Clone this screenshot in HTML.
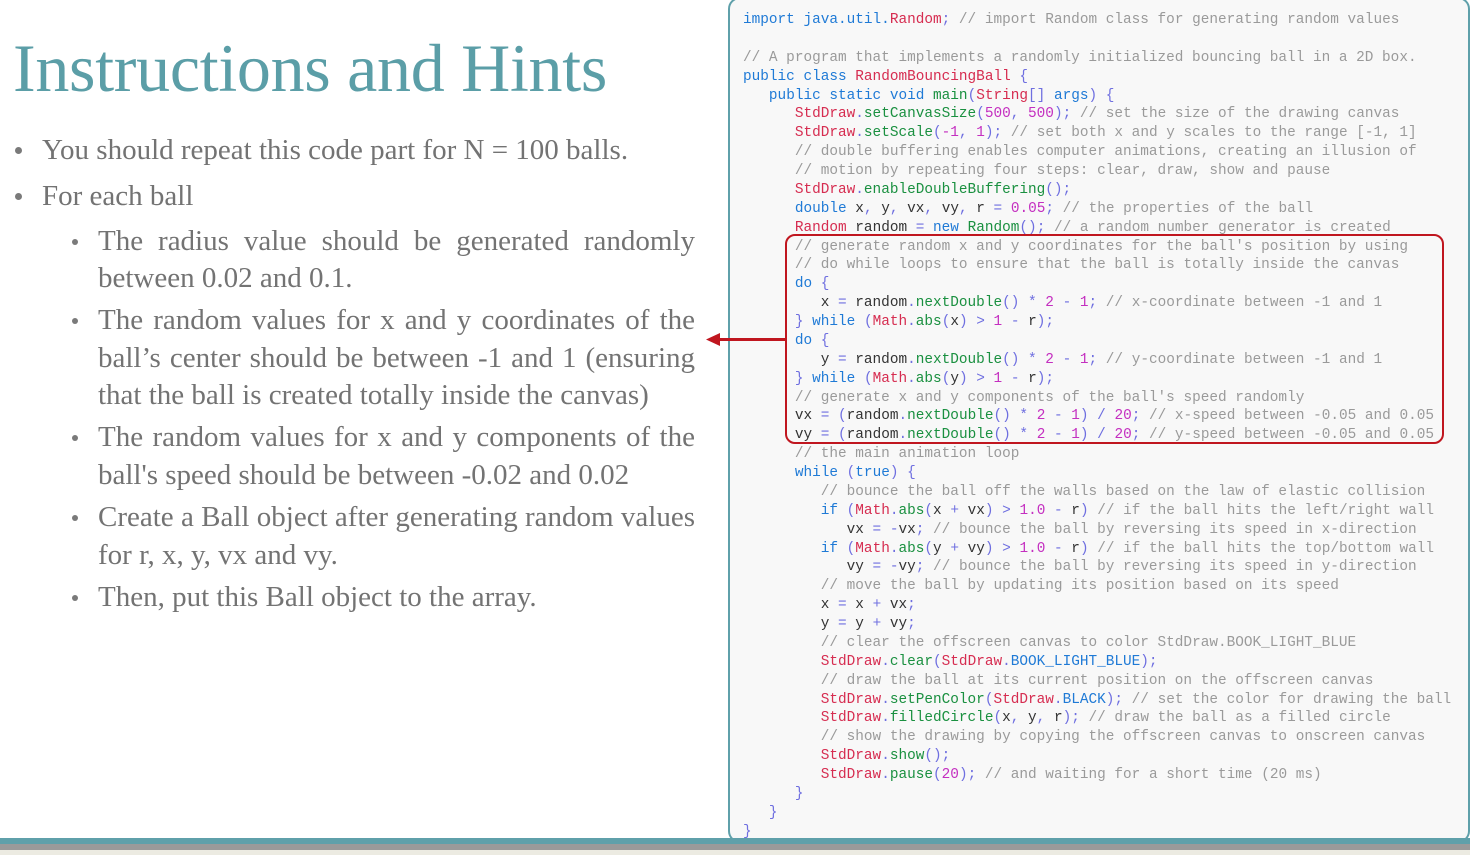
<!DOCTYPE html>
<html><head><meta charset="utf-8"><style>
body{margin:0;width:1470px;height:855px;background:#fff;position:relative;overflow:hidden;font-family:"Liberation Serif",serif}
.title{position:absolute;left:13px;top:28px;font-size:68px;color:#5b9ea7;letter-spacing:-0.3px;white-space:nowrap;line-height:80px}
.l{position:absolute;color:#737373;font-size:29px;letter-spacing:0px;white-space:nowrap;line-height:36px}
.j{text-align:justify;text-align-last:justify;width:597px}
.d{position:absolute;width:7px;height:7px;border-radius:50%;background:#7a7a7a}
.s{width:6px;height:6px}
.code{position:absolute;left:728px;top:-3px;width:738px;height:842px;border:2px solid #5fa0aa;border-radius:12px;background:#f8f8f8}
pre{position:absolute;left:743px;top:11px;margin:0;font-family:"Liberation Mono",monospace;font-size:14.4px;line-height:18.87px;color:#333}
.k{color:#1f7ad6}.r{color:#d62c50}.g{color:#1a9040}.n{color:#c42fc0}.c{color:#9a9a9a}.p{color:#6f6fe0}
.box{position:absolute;left:785px;top:234px;width:655px;height:206px;border:2px solid #c0161f;border-radius:10px}
.bot1{position:absolute;left:0;top:838px;width:1470px;height:6px;background:#5fa0aa}
.bot2{position:absolute;left:0;top:844px;width:1470px;height:6px;background:#9a9a9a}
.bot3{position:absolute;left:0;top:850px;width:1470px;height:5px;background:#ecebe2}
</style></head><body>
<div class="title">Instructions and Hints</div>
<div class="d" style="left:15px;top:147px"></div>
<div class="l" style="left:42px;top:132px">You should repeat this code part for N = 100 balls.</div>
<div class="d" style="left:15px;top:193px"></div>
<div class="l" style="left:42px;top:178px">For each ball</div>
<div class="d s" style="left:72px;top:239px"></div>
<div class="l j" style="left:98px;top:223px">The radius value should be generated randomly</div>
<div class="l" style="left:98px;top:260px">between 0.02 and 0.1.</div>
<div class="d s" style="left:72px;top:318px"></div>
<div class="l j" style="left:98px;top:302px">The random values for x and y coordinates of the</div>
<div class="l j" style="left:98px;top:340px">ball’s center should be between -1 and 1 (ensuring</div>
<div class="l" style="left:98px;top:377px">that the ball is created totally inside the canvas)</div>
<div class="d s" style="left:72px;top:435px"></div>
<div class="l j" style="left:98px;top:419px">The random values for x and y components of the</div>
<div class="l" style="left:98px;top:457px">ball's speed should be between -0.02 and 0.02</div>
<div class="d s" style="left:72px;top:515px"></div>
<div class="l j" style="left:98px;top:499px">Create a Ball object after generating random values</div>
<div class="l" style="left:98px;top:537px">for r, x, y, vx and vy.</div>
<div class="d s" style="left:72px;top:595px"></div>
<div class="l" style="left:98px;top:579px">Then, put this Ball object to the array.</div>

<div class="code"></div>
<pre><span class="k">import java.util.</span><span class="r">Random</span><span class="p">;</span> <span class="c">// import Random class for generating random values</span>

<span class="c">// A program that implements a randomly initialized bouncing ball in a 2D box.</span>
<span class="k">public class</span> <span class="r">RandomBouncingBall</span> <span class="p">{</span>
   <span class="k">public static void</span> <span class="g">main</span><span class="p">(</span><span class="r">String</span><span class="p">[]</span> <span class="k">args</span><span class="p">) {</span>
      <span class="r">StdDraw</span><span class="p">.</span><span class="g">setCanvasSize</span><span class="p">(</span><span class="n">500</span><span class="p">,</span> <span class="n">500</span><span class="p">);</span> <span class="c">// set the size of the drawing canvas</span>
      <span class="r">StdDraw</span><span class="p">.</span><span class="g">setScale</span><span class="p">(</span><span class="n">-1</span><span class="p">,</span> <span class="n">1</span><span class="p">);</span> <span class="c">// set both x and y scales to the range [-1, 1]</span>
      <span class="c">// double buffering enables computer animations, creating an illusion of</span>
      <span class="c">// motion by repeating four steps: clear, draw, show and pause</span>
      <span class="r">StdDraw</span><span class="p">.</span><span class="g">enableDoubleBuffering</span><span class="p">();</span>
      <span class="k">double</span> x<span class="p">,</span> y<span class="p">,</span> vx<span class="p">,</span> vy<span class="p">,</span> r <span class="p">=</span> <span class="n">0.05</span><span class="p">;</span> <span class="c">// the properties of the ball</span>
      <span class="r">Random</span> random <span class="p">=</span> <span class="k">new</span> <span class="g">Random</span><span class="p">();</span> <span class="c">// a random number generator is created</span>
      <span class="c">// generate random x and y coordinates for the ball's position by using</span>
      <span class="c">// do while loops to ensure that the ball is totally inside the canvas</span>
      <span class="k">do</span> <span class="p">{</span>
         x <span class="p">=</span> random<span class="p">.</span><span class="g">nextDouble</span><span class="p">()</span> <span class="p">*</span> <span class="n">2</span> <span class="p">-</span> <span class="n">1</span><span class="p">;</span> <span class="c">// x-coordinate between -1 and 1</span>
      <span class="p">}</span> <span class="k">while</span> <span class="p">(</span><span class="r">Math</span><span class="p">.</span><span class="g">abs</span><span class="p">(</span>x<span class="p">) &gt;</span> <span class="n">1</span> <span class="p">-</span> r<span class="p">);</span>
      <span class="k">do</span> <span class="p">{</span>
         y <span class="p">=</span> random<span class="p">.</span><span class="g">nextDouble</span><span class="p">()</span> <span class="p">*</span> <span class="n">2</span> <span class="p">-</span> <span class="n">1</span><span class="p">;</span> <span class="c">// y-coordinate between -1 and 1</span>
      <span class="p">}</span> <span class="k">while</span> <span class="p">(</span><span class="r">Math</span><span class="p">.</span><span class="g">abs</span><span class="p">(</span>y<span class="p">) &gt;</span> <span class="n">1</span> <span class="p">-</span> r<span class="p">);</span>
      <span class="c">// generate x and y components of the ball's speed randomly</span>
      vx <span class="p">= (</span>random<span class="p">.</span><span class="g">nextDouble</span><span class="p">()</span> <span class="p">*</span> <span class="n">2</span> <span class="p">-</span> <span class="n">1</span><span class="p">) /</span> <span class="n">20</span><span class="p">;</span> <span class="c">// x-speed between -0.05 and 0.05</span>
      vy <span class="p">= (</span>random<span class="p">.</span><span class="g">nextDouble</span><span class="p">()</span> <span class="p">*</span> <span class="n">2</span> <span class="p">-</span> <span class="n">1</span><span class="p">) /</span> <span class="n">20</span><span class="p">;</span> <span class="c">// y-speed between -0.05 and 0.05</span>
      <span class="c">// the main animation loop</span>
      <span class="k">while</span> <span class="p">(</span><span class="k">true</span><span class="p">) {</span>
         <span class="c">// bounce the ball off the walls based on the law of elastic collision</span>
         <span class="k">if</span> <span class="p">(</span><span class="r">Math</span><span class="p">.</span><span class="g">abs</span><span class="p">(</span>x <span class="p">+</span> vx<span class="p">) &gt;</span> <span class="n">1.0</span> <span class="p">-</span> r<span class="p">)</span> <span class="c">// if the ball hits the left/right wall</span>
            vx <span class="p">= -</span>vx<span class="p">;</span> <span class="c">// bounce the ball by reversing its speed in x-direction</span>
         <span class="k">if</span> <span class="p">(</span><span class="r">Math</span><span class="p">.</span><span class="g">abs</span><span class="p">(</span>y <span class="p">+</span> vy<span class="p">) &gt;</span> <span class="n">1.0</span> <span class="p">-</span> r<span class="p">)</span> <span class="c">// if the ball hits the top/bottom wall</span>
            vy <span class="p">= -</span>vy<span class="p">;</span> <span class="c">// bounce the ball by reversing its speed in y-direction</span>
         <span class="c">// move the ball by updating its position based on its speed</span>
         x <span class="p">=</span> x <span class="p">+</span> vx<span class="p">;</span>
         y <span class="p">=</span> y <span class="p">+</span> vy<span class="p">;</span>
         <span class="c">// clear the offscreen canvas to color StdDraw.BOOK_LIGHT_BLUE</span>
         <span class="r">StdDraw</span><span class="p">.</span><span class="g">clear</span><span class="p">(</span><span class="r">StdDraw</span><span class="p">.</span><span class="k">BOOK_LIGHT_BLUE</span><span class="p">);</span>
         <span class="c">// draw the ball at its current position on the offscreen canvas</span>
         <span class="r">StdDraw</span><span class="p">.</span><span class="g">setPenColor</span><span class="p">(</span><span class="r">StdDraw</span><span class="p">.</span><span class="k">BLACK</span><span class="p">);</span> <span class="c">// set the color for drawing the ball</span>
         <span class="r">StdDraw</span><span class="p">.</span><span class="g">filledCircle</span><span class="p">(</span>x<span class="p">,</span> y<span class="p">,</span> r<span class="p">);</span> <span class="c">// draw the ball as a filled circle</span>
         <span class="c">// show the drawing by copying the offscreen canvas to onscreen canvas</span>
         <span class="r">StdDraw</span><span class="p">.</span><span class="g">show</span><span class="p">();</span>
         <span class="r">StdDraw</span><span class="p">.</span><span class="g">pause</span><span class="p">(</span><span class="n">20</span><span class="p">);</span> <span class="c">// and waiting for a short time (20 ms)</span>
      <span class="p">}</span>
   <span class="p">}</span>
<span class="p">}</span></pre>
<div class="box"></div>
<svg style="position:absolute;left:700px;top:330px" width="90" height="20"><line x1="18" y1="9.5" x2="87" y2="9.5" stroke="#c0161f" stroke-width="3"/><polygon points="6,9.5 20,3 20,16" fill="#c0161f"/></svg>
<div class="bot1"></div><div class="bot2"></div><div class="bot3"></div>
</body></html>
